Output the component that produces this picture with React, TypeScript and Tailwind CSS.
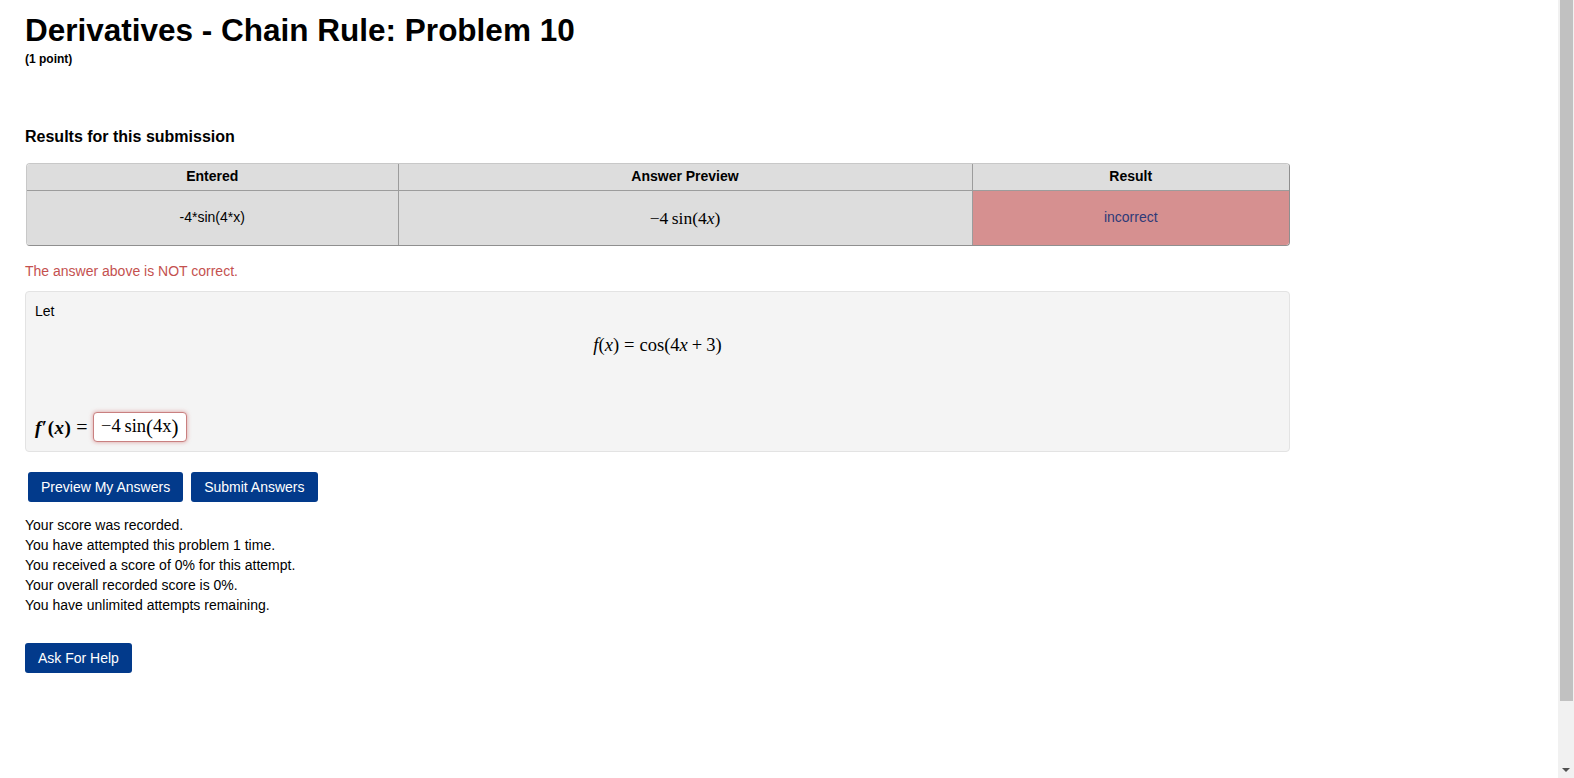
import React from 'react'

const serif = "font-['Liberation_Serif','Times_New_Roman',serif]"

function V({ children }: { children: React.ReactNode }) {
  return <span className="italic">{children}</span>
}

function ScoreLines() {
  const lines = [
    'Your score was recorded.',
    'You have attempted this problem 1 time.',
    'You received a score of 0% for this attempt.',
    'Your overall recorded score is 0%.',
    'You have unlimited attempts remaining.',
  ]
  return (
    <div className="mt-[13px] text-[14px] leading-[20px]">
      {lines.map((l) => (
        <div key={l}>{l}</div>
      ))}
    </div>
  )
}

function ResultsTable() {
  const head = 'bg-[#dddddd] font-bold text-[14px] h-[26px] text-center border-b border-r border-b-[#9c9c9c] border-r-[#9c9c9c]'
  const body = 'h-[55px] text-[14px] text-center border-r border-r-[#9c9c9c] border-t border-t-white'
  return (
    <div className="mt-[16px] ml-[1px] overflow-hidden rounded-[4px] border border-[#c8c8c8] border-b-[#8f8f8f] border-r-[#8f8f8f]">
      <table className="w-full border-collapse">
        <thead>
          <tr>
            <th className={`${head} w-[371px]`}>Entered</th>
            <th className={`${head} w-[574px] border-l border-l-white`}>Answer Preview</th>
            <th className={`${head} border-l border-l-white border-r-0`}>Result</th>
          </tr>
        </thead>
        <tbody>
          <tr>
            <td className={`${body} bg-[#dddddd]`}>-4*sin(4*x)</td>
            <td className={`${body} bg-[#dddddd] border-l border-l-white`}>
              <span className={`${serif} text-[17.5px]`}>
                −4&thinsp;sin(4<V>x</V>)
              </span>
            </td>
            <td className={`${body} bg-[#d69090] text-[#2e3a78] border-l border-l-white border-r-0`}>incorrect</td>
          </tr>
        </tbody>
      </table>
    </div>
  )
}

function ProblemBox() {
  return (
    <div className="mt-[10px] h-[161px] rounded-[4px] border border-[#e3e3e3] bg-[#f4f4f4] px-[9px] pt-[9px]">
      <div className="text-[14px] leading-[20px]">Let</div>
      <div className={`${serif} mt-[12px] text-center text-[18.5px] leading-[24px]`}>
        <V>f</V>(<V>x</V>)<span className="mx-[5px]">=</span>cos(4<V>x</V>
        <span className="mx-[4px]">+</span>3)
      </div>
      <div className="mt-[55px] flex items-center">
        <span className={`${serif} text-[19px] font-semibold tracking-[0.5px]`}>
          <V>f</V>′(<V>x</V>)<span className="ml-[5px] text-[20px] font-normal">=</span>
        </span>
        <span
          className={`${serif} ml-[5px] flex h-[30px] items-center rounded-[4px] border border-[#c98080] bg-white px-[7px] text-[18.5px] shadow-[0_0_4px_rgba(200,80,80,0.55)]`}
        >
          −4&thinsp;sin<span className="text-[21px] leading-none">(</span>4x<span className="text-[21px] leading-none">)</span>
        </span>
      </div>
    </div>
  )
}

function BlueButton({ label, className = '' }: { label: string; className?: string }) {
  return (
    <button
      type="button"
      className={`h-[30px] rounded-[3px] bg-[#023a8b] px-[13px] text-[14px] text-white ${className}`}
    >
      {label}
    </button>
  )
}

export default function App() {
  return (
    <div className="relative min-h-screen bg-white font-['Liberation_Sans',Arial,sans-serif] text-black">
      <div className="w-[1290px] pl-[25px] pt-[12px]">
        <h1 className="text-[31.5px] font-bold leading-[36px]">Derivatives - Chain Rule: Problem 10</h1>
        <div className="mt-[4px] text-[12px] font-bold leading-[14px]">(1 point)</div>

        <h2 className="mt-[61px] text-[16px] font-bold leading-[20px]">Results for this submission</h2>
        <ResultsTable />

        <div className="mt-[15px] text-[14px] leading-[20px] text-[#c4514f]">The answer above is NOT correct.</div>

        <ProblemBox />

        <div className="mt-[20px] ml-[3px] flex gap-[8px]">
          <BlueButton label="Preview My Answers" />
          <BlueButton label="Submit Answers" />
        </div>

        <ScoreLines />

        <div className="mt-[28px]">
          <BlueButton label="Ask For Help" />
        </div>
      </div>

      {/* browser scrollbar */}
      <div className="fixed right-0 top-0 h-full w-[16px] bg-[#f1f1f1]">
        <div className="ml-[2px] mr-[1px] h-[701px] bg-[#c1c1c1]" />
        <div className="absolute bottom-[6px] left-[4px] h-0 w-0 border-x-[4px] border-t-[4px] border-x-transparent border-t-[#505050]" />
      </div>
    </div>
  )
}
